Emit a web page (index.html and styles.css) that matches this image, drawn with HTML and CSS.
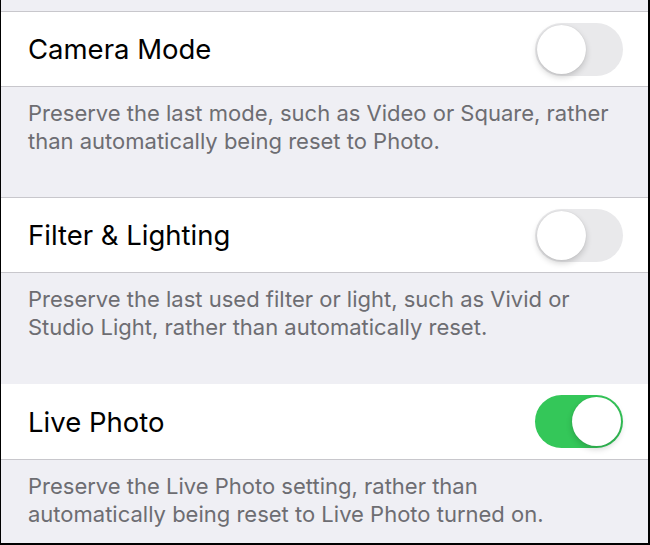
FILE: index.html
```html
<!DOCTYPE html>
<html lang="en">
  <head>
    <meta charset="UTF-8" />
    <title>Camera Settings</title>
    <link rel="stylesheet" href="styles.css">
  </head>

  <body>
    <div class="screen">
      <div class="spacer"></div>

      <div class="cell">
        <p class="label">Camera Mode</p>
        <div class="switch"><div class="knob"></div></div>
      </div>
      <div class="footer">
        <p>Preserve the last mode, such as Video or Square, rather than automatically being reset to Photo.</p>
      </div>

      <div class="cell">
        <p class="label">Filter &amp; Lighting</p>
        <div class="switch"><div class="knob"></div></div>
      </div>
      <div class="footer footer-mid">
        <p>Preserve the last used filter or light, such as Vivid or Studio Light, rather than automatically reset.</p>
      </div>

      <div class="cell no-top">
        <p class="label">Live Photo</p>
        <div class="switch on"><div class="knob"></div></div>
      </div>
      <div class="footer footer-last">
        <p>Preserve the Live Photo setting, rather than automatically being reset to Live Photo turned on.</p>
      </div>
    </div>
  </body>
</html>
```

FILE: styles.css
```css
html,
body {
  margin: 0;
  height: 100%;
}

body {
  font-family: "Inter", "Liberation Sans", sans-serif;
  background-color: #000;
}

.screen {
  height: 543px;
  margin-left: 1px;
  margin-right: 2px;
  background-color: #efeff4;
  overflow: hidden;
}

.spacer {
  height: 11px;
}

.cell {
  display: flex;
  align-items: center;
  justify-content: space-between;
  height: 74px;
  background-color: #fff;
  border-top: 1px solid #c8c7cc;
  border-bottom: 1px solid #c8c7cc;
  padding: 0 25px 0 27px;
}

.cell.no-top {
  border-top: none;
  height: 75px;
}

.label {
  margin: 0;
  font-size: 27.5px;
  color: #000;
}

.switch {
  position: relative;
  width: 88px;
  height: 53px;
  border-radius: 27px;
  background-color: #e9e9eb;
}

.knob {
  position: absolute;
  top: 2px;
  left: 2px;
  width: 49px;
  height: 49px;
  border-radius: 50%;
  background-color: #fff;
  box-shadow: 0 3px 6px rgba(0, 0, 0, 0.18), 0 0 1px rgba(0, 0, 0, 0.15);
}

.switch.on {
  background-color: #34c759;
}

.switch.on .knob {
  left: auto;
  right: 2px;
}

.footer {
  padding: 12px 29px 42px 27px;
}

.footer-mid {
  padding-bottom: 43px;
}

.footer-last {
  padding-bottom: 0;
}

.footer p {
  margin: 0;
  font-size: 22px;
  line-height: 28px;
  color: #6d6d72;
}
```
